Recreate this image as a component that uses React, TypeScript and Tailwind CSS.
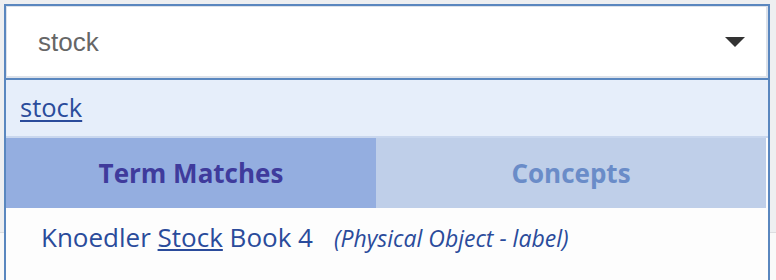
import React from 'react';

const sans = { fontFamily: '"Open Sans", "Noto Sans", sans-serif' };

export default function App() {
  return (
    <div className="h-[280px] overflow-hidden pl-1 pt-1 bg-[linear-gradient(to_bottom,#eeeff1_232px,#dcdde0_232px,#dcdde0_233px,#f9f9f9_233px)]">
      <div className="w-[766px] h-[276px] border-t-2 border-x-2 border-[#5a87bf] bg-[#fdfdfd] flex flex-col">
        {/* search input */}
        <div className="h-[72px] shrink-0 bg-white border-t border-l border-r-2 border-b-2 border-[#dde2ea] flex items-center justify-between pl-[31px] pr-[21px]">
          <span className="text-[26px] text-[#666] leading-none" style={{ fontFamily: '"Liberation Sans", Arial, sans-serif' }}>stock</span>
          <svg width="20" height="10" viewBox="0 0 20 10"><path d="M0 0h20L10 10z" fill="#333" /></svg>
        </div>
        <div className="h-[2px] shrink-0 bg-[#5a87bf]" />
        {/* suggestion */}
        <div className="h-[58px] shrink-0 bg-[#e6eefa] flex items-center pl-[14px] border-b-2 border-[#c9d7ee]" style={sans}>
          <a className="text-[25.5px] text-[#2a4b9b] underline underline-offset-[3px] decoration-[2px] leading-none">stock</a>
        </div>
        {/* tabs */}
        <div className="h-[70px] shrink-0 flex mr-[2px]" style={sans}>
          <div className="w-[370px] bg-[#94aee0] flex items-center justify-center text-[26px] font-bold text-[#3f3b9c]">Term Matches</div>
          <div className="flex-1 bg-[#bfcfe9] flex items-center justify-center text-[26px] font-bold text-[#6a8cc8]">Concepts</div>
        </div>
        {/* results */}
        <div className="pt-[10px] pl-[35px] flex items-baseline text-[#2a4b9b]" style={sans}>
          <span className="text-[26px]">Knoedler <span className="underline underline-offset-[2px] decoration-[2px]">Stock</span> Book 4</span>
          <span className="ml-[21px] text-[23px] italic">(Physical Object - label)</span>
        </div>
      </div>
    </div>
  );
}
